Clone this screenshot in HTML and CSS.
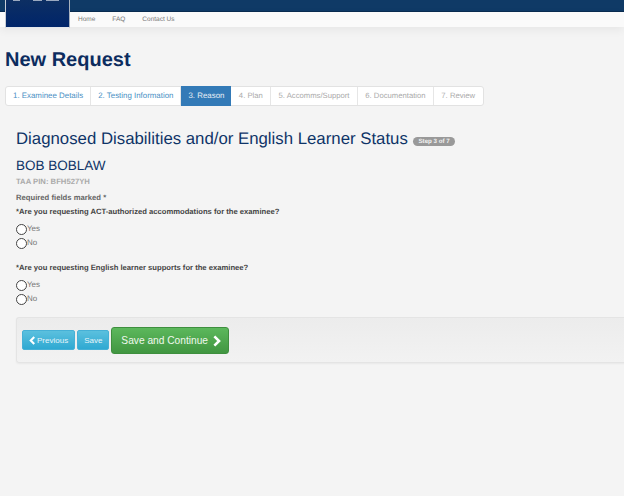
FILE: index.html
```html
<!DOCTYPE html>
<html lang="en">
<head>
<meta charset="utf-8">
<title>New Request</title>
<link rel="stylesheet" href="styles.css">
</head>
<body>
<header class="site-header">
  <div class="top-bar"></div>
  <nav class="main-nav">
    <a href="#">Home</a>
    <a href="#">FAQ</a>
    <a href="#">Contact Us</a>
  </nav>
  <div class="logo"></div>
</header>
<main class="page">
  <h1 class="page-title">New Request</h1>
  <ol class="steps">
    <li class="step link">1. Examinee Details</li>
    <li class="step link">2. Testing Information</li>
    <li class="step active">3. Reason</li>
    <li class="step">4. Plan</li>
    <li class="step">5. Accomms/Support</li>
    <li class="step">6. Documentation</li>
    <li class="step">7. Review</li>
  </ol>
  <section class="content">
    <h2 class="section-title">Diagnosed Disabilities and/or English Learner Status <span class="badge">Step 3 of 7</span></h2>
    <h3 class="name">BOB BOBLAW</h3>
    <p class="pin">TAA PIN: BFH527YH</p>
    <p class="required">Required fields marked *</p>
    <form>
      <div class="question">
        <p class="q-text">*Are you requesting ACT-authorized accommodations for the examinee?</p>
        <label class="option"><span class="radio"></span>Yes</label>
        <label class="option"><span class="radio"></span>No</label>
      </div>
      <div class="question second">
        <p class="q-text">*Are you requesting English learner supports for the examinee?</p>
        <label class="option"><span class="radio"></span>Yes</label>
        <label class="option"><span class="radio"></span>No</label>
      </div>
      <div class="well">
        <button type="button" class="btn info">
          <svg class="chev-sm" viewBox="0 0 8 10" aria-hidden="true"><path d="M6 1 2 5l4 4" fill="none" stroke="#fff" stroke-width="2.4"/></svg>Previous
        </button>
        <button type="button" class="btn info">Save</button>
        <button type="button" class="btn success">Save and Continue
          <svg class="chev-lg" viewBox="0 0 10 14" aria-hidden="true"><path d="M2.5 1.5 8 7l-5.500 5.500" fill="none" stroke="#fff" stroke-width="3"/></svg>
        </button>
      </div>
    </form>
  </section>
</main>
</body>
</html>
```
FILE: styles.css
```css
* { box-sizing: border-box; }
html, body { margin: 0; height: 100%; }
body {
  width: 624px;
  height: 496px;
  overflow: hidden;
  background: #f4f4f4;
  font-family: "Liberation Sans", Arial, sans-serif;
  color: #444;
  text-rendering: geometricPrecision;
}
.site-header { position: relative; }
.top-bar {
  height: 12px;
  background: #0f3a66;
  border-bottom: 1px solid #0a2c50;
}
.main-nav {
  height: 15px;
  padding-left: 78px;
  display: flex;
  gap: 17px;
  align-items: center;
  background: #fafafa;
  box-shadow: 0 3px 10px rgba(0,0,0,.06);
}
.main-nav a {
  font-size: 6.500px;
  color: #777;
  text-decoration: none;
}
.logo {
  position: absolute;
  left: 5px;
  top: 0;
  width: 65px;
  height: 28px;
  background: linear-gradient(#0d2f63, #00256a);
  border-left: 1px solid #c9ced6;
  border-right: 1px solid #a9b2bf;
  border-bottom: 1px solid #e4e7ec;
}
.logo::before {
  content: "";
  display: block;
  height: 1px;
  margin: 0 10px 0 7px;
  background: linear-gradient(90deg,
    #9aa9c0 0 15%, transparent 15% 43%,
    #9aa9c0 43% 62%, transparent 62% 72%,
    #9aa9c0 72% 100%);
}
.page { padding: 0 0 0 5px; }
.page-title {
  margin: 20px 0 0;
  font-size: 20px;
  line-height: 26px;
  font-weight: bold;
  color: #0c2c5f;
}
.steps {
  list-style: none;
  display: inline-flex;
  margin: 13px 0 0;
  padding: 0;
  height: 20px;
  background: #fff;
  border: 1px solid #e2e2e2;
  border-radius: 3px;
}
.step {
  padding: 0 7.400px;
  font-size: 7.700px;
  line-height: 18px;
  color: #aaa;
  border-right: 1px solid #e6e6e6;
  white-space: nowrap;
}
.step:last-child { border-right: 0; }
.step.link { padding: 0 7px; color: #4a90c4; font-size: 7.900px; }
.step.active {
  margin: -1px 0;
  padding: 0 7px;
  font-size: 7.900px;
  line-height: 20px;
  background: #337ab7;
  color: #e8eef5;
  border-right: 0;
}
.content { padding-left: 11px; }
.section-title {
  margin: 22px 0 0;
  font-size: 16.800px;
  line-height: 22px;
  font-weight: normal;
  color: #0f3468;
  white-space: nowrap;
}
.badge {
  display: inline-block;
  vertical-align: 1px;
  margin-left: 1px;
  padding: 0 5px;
  height: 9px;
  border-radius: 5px;
  background: #999;
  color: #f2f2f2;
  font-size: 6.200px;
  line-height: 9px;
  font-weight: bold;
}
.name {
  margin: 7px 0 0;
  font-size: 13.500px;
  line-height: 17px;
  font-weight: normal;
  color: #0f3468;
}
.pin {
  margin: 3px 0 0;
  font-size: 7.700px;
  line-height: 10px;
  font-weight: bold;
  color: #aaa;
}
.required {
  margin: 6px 0 0;
  font-size: 7.700px;
  line-height: 10px;
  font-weight: bold;
  color: #666;
}
.question { margin-top: 4px; }
.second { margin-top: 14px; }
.q-text {
  margin: 0 0 4px;
  font-size: 7.650px;
  line-height: 10px;
  font-weight: bold;
  color: #444;
}
.option {
  display: flex;
  height: 14px;
  font-size: 8px;
  line-height: 15px;
  color: #777;
}
.radio {
  width: 11px;
  height: 11px;
  margin-top: 3px;
  border: 1px solid #444;
  border-radius: 50%;
  background: #fff;
}
.well {
  display: flex;
  align-items: flex-start;
  gap: 2px;
  height: 46px;
  margin-top: 12px;
  margin-right: -20px;
  padding: 9px 0 0 5px;
  background: linear-gradient(#ececec, #f2f2f2);
  border: 1px solid #e4e4e4;
  border-right: 0;
  border-radius: 3px 0 0 3px;
  box-shadow: 0 1px 2px rgba(0,0,0,.05);
}
.btn {
  display: inline-flex;
  align-items: center;
  justify-content: center;
  padding: 0;
  font-family: inherit;
  border-radius: 2px;
  color: #e6f4fa;
  white-space: nowrap;
}
.info {
  height: 20px;
  margin-top: 3px;
  padding: 0 6px;
  font-size: 8px;
  background: linear-gradient(#5bc0de, #2fa9d2);
  border: 1px solid #46b0d6;
}
.success {
  height: 27px;
  padding: 0 7px 0 9px;
  gap: 4px;
  font-size: 10.200px;
  color: #f0f8ee;
  background: linear-gradient(#5cb85c, #419641);
  border: 1px solid #3e8f3e;
  border-radius: 3px;
}
.chev-sm { width: 7px; height: 9px; margin-right: 1px; }
.chev-lg { width: 9px; height: 12px; }
```
